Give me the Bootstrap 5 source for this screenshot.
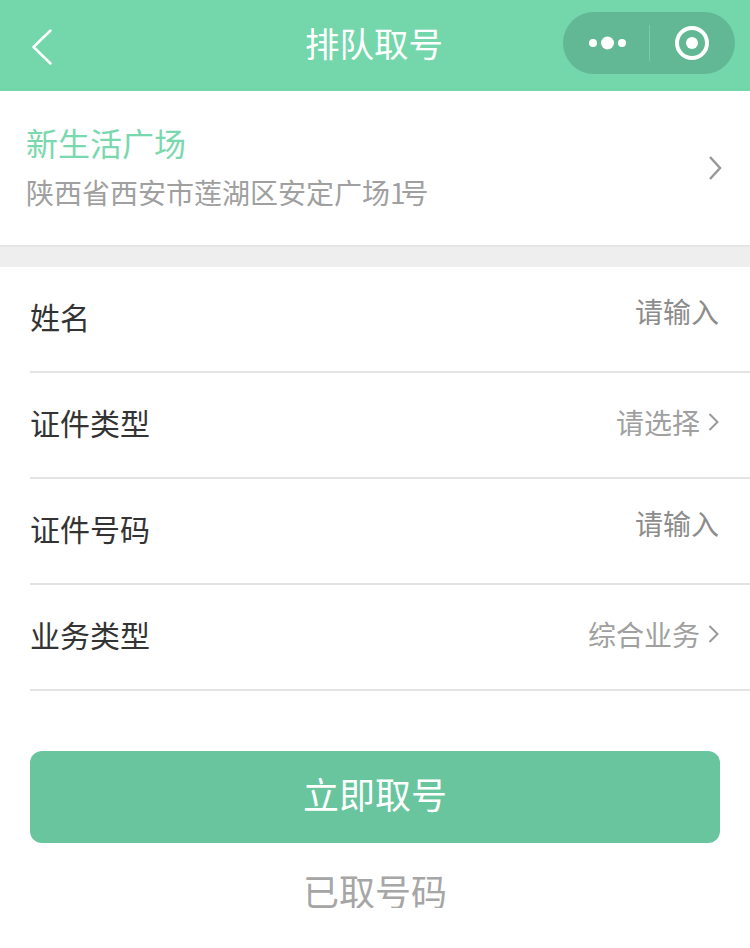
<!DOCTYPE html>
<html lang="zh-CN">
<head>
    <meta charset="UTF-8">
    <meta name="viewport" content="width=device-width, initial-scale=1.0">
    <title>排队取号</title>
    <link href="https://cdn.jsdelivr.net/npm/bootstrap@5.3.3/dist/css/bootstrap.min.css" rel="stylesheet">
    <style>
        body { font-family: "Noto Sans CJK SC", "Liberation Sans", sans-serif; background: #fff; }
        .top-bar { height: 91px; background: #74d6ab; padding: 0 15px 0 30px; }
        .back-icon { margin-top: 3px; }
        .top-title { font-size: 34.5px; line-height: 1; color: #fff; top: 25px; left: 0; right: 2px; }
        .capsule { width: 172px; height: 62px; margin-top: -6px; border-radius: 31px; background: #62b894; }
        .capsule-rule { width: 1px; height: 36px; background: #7cc8a8; }
        .capsule-side { width: 86px; }
        .ring-icon { margin-left: -1px; }
        .store-block { height: 156px; padding: 0 28px 0 26px; border-bottom: 2px solid #e6e6e6; }
        .store-text { padding-bottom: 5px; }
        .store-name { font-size: 32px; line-height: 44px; color: #7ad8ae; }
        .store-addr { font-size: 28px; line-height: 40px; color: #a0a0a0; margin-top: 8px; }
        .addr-num { letter-spacing: -5px; }
        .gap-band { height: 20px; background: #eee; }
        .form-line { height: 106px; margin-left: 30px; padding: 0 30px 6px 0; border-bottom: 2px solid #e3e3e3; }
        .line-label { font-size: 30px; line-height: 1; color: #333; }
        .line-value { font-size: 28px; line-height: 1; color: #a0a0a0; }
        .line-pick { margin-right: 1px; }
        .line-input { color: #8c8c8c; margin: -11px 1px 0 0; }
        .take-btn { height: 92px; margin: 60px 30px 0; padding-bottom: 8px; font-size: 36px; line-height: 1; color: #fff; background: #68c59e; border-radius: 12px; }
        .taken-link { font-size: 36px; line-height: 1; color: #a6a6a6; margin-top: 29px; }
    </style>
</head>
<body>
    <header class="top-bar d-flex align-items-center justify-content-between position-relative">
        <svg class="back-icon" width="24" height="36" viewBox="0 0 24 36" fill="none" stroke="#fff" stroke-width="2.500" stroke-linecap="round" stroke-linejoin="round"><path d="M20.500 1.500 L3.500 18 L20.500 34.500"/></svg>
        <div class="top-title position-absolute text-center">排队取号</div>
        <div class="capsule d-flex align-items-center">
            <div class="capsule-side d-flex justify-content-center">
                <svg width="40" height="14" viewBox="0 0 40 14" fill="#fff"><circle cx="7" cy="7" r="4"/><circle cx="21.500" cy="7" r="6.500"/><circle cx="36" cy="7" r="4"/></svg>
            </div>
            <div class="capsule-rule"></div>
            <div class="capsule-side d-flex justify-content-center">
                <svg class="ring-icon" width="34" height="34" viewBox="0 0 34 34"><circle cx="17" cy="17" r="15" fill="none" stroke="#fff" stroke-width="4"/><circle cx="17" cy="17" r="6" fill="#fff"/></svg>
            </div>
        </div>
    </header>

    <section class="store-block d-flex align-items-center justify-content-between">
        <div class="store-text">
            <div class="store-name">新生活广场</div>
            <div class="store-addr">陕西省西安市莲湖区安定广场<span class="addr-num">1</span>号</div>
        </div>
        <svg width="14" height="24" viewBox="0 0 14 24" fill="none" stroke="#999" stroke-width="2.500"><path d="M2 1 L12 12 L2 23"/></svg>
    </section>
    <div class="gap-band"></div>

    <div class="form-line d-flex align-items-center justify-content-between">
        <span class="line-label">姓名</span>
        <span class="line-value line-input">请输入</span>
    </div>
    <div class="form-line d-flex align-items-center justify-content-between">
        <span class="line-label">证件类型</span>
        <span class="line-value line-pick d-flex align-items-center gap-2">请选择
            <svg width="11" height="18" viewBox="0 0 11 18" fill="none" stroke="#999" stroke-width="2"><path d="M1.500 1 L9.500 9 L1.500 17"/></svg>
        </span>
    </div>
    <div class="form-line d-flex align-items-center justify-content-between">
        <span class="line-label">证件号码</span>
        <span class="line-value line-input">请输入</span>
    </div>
    <div class="form-line d-flex align-items-center justify-content-between">
        <span class="line-label">业务类型</span>
        <span class="line-value line-pick d-flex align-items-center gap-2">综合业务
            <svg width="11" height="18" viewBox="0 0 11 18" fill="none" stroke="#999" stroke-width="2"><path d="M1.500 1 L9.500 9 L1.500 17"/></svg>
        </span>
    </div>

    <div class="take-btn d-flex align-items-center justify-content-center">立即取号</div>
    <div class="taken-link text-center">已取号码</div>
</body>
</html>
